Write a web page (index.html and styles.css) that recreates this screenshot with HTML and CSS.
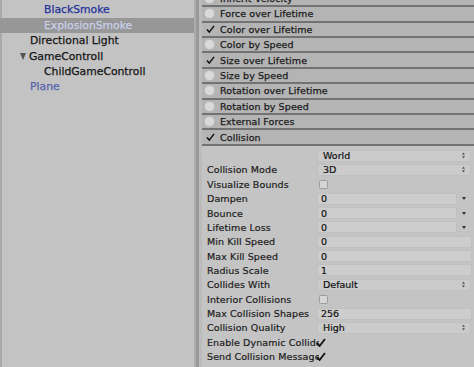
FILE: index.html
```html
<!DOCTYPE html>
<html>
<head>
<meta charset="utf-8">
<link rel="stylesheet" href="styles.css">
</head>
<body>
<div class="app">
  <div class="hierarchy">
    <div class="hrow lvl2 prefab">BlackSmoke</div>
    <div class="hrow lvl2 selected">ExplosionSmoke</div>
    <div class="hrow lvl1">Directional Light</div>
    <div class="hrow lvl0"><span class="tri"></span>GameControll</div>
    <div class="hrow lvl2">ChildGameControll</div>
    <div class="hrow lvl1 prefab-light">Plane</div>
  </div>
  <div class="split"></div>
  <div class="inspector">
    <div class="modules">
      <div class="mod"><span class="radio"></span><span class="mtitle">Inherit Velocity</span></div>
      <div class="mod"><span class="radio"></span><span class="mtitle">Force over Lifetime</span></div>
      <div class="mod"><svg class="check" viewBox="0 0 10 9"><path d="M1 5 L3.6 8 L9 1" fill="none" stroke="#111" stroke-width="1.7"/></svg><span class="mtitle">Color over Lifetime</span></div>
      <div class="mod"><span class="radio"></span><span class="mtitle">Color by Speed</span></div>
      <div class="mod"><svg class="check" viewBox="0 0 10 9"><path d="M1 5 L3.6 8 L9 1" fill="none" stroke="#111" stroke-width="1.7"/></svg><span class="mtitle">Size over Lifetime</span></div>
      <div class="mod"><span class="radio"></span><span class="mtitle">Size by Speed</span></div>
      <div class="mod"><span class="radio"></span><span class="mtitle">Rotation over Lifetime</span></div>
      <div class="mod"><span class="radio"></span><span class="mtitle">Rotation by Speed</span></div>
      <div class="mod"><span class="radio"></span><span class="mtitle">External Forces</span></div>
      <div class="mod"><svg class="check" viewBox="0 0 10 9"><path d="M1 5 L3.6 8 L9 1" fill="none" stroke="#111" stroke-width="1.7"/></svg><span class="mtitle">Collision</span></div>
      <div class="body">
        <div class="prow"><span class="lbl"></span><div class="field drop"><span>World</span><svg class="updown" viewBox="0 0 4 8"><path d="M2 0 L4 3 L0 3Z M0 5 L4 5 L2 8Z" fill="#555"/></svg></div></div>
        <div class="prow"><span class="lbl">Collision Mode</span><div class="field drop"><span>3D</span><svg class="updown" viewBox="0 0 4 8"><path d="M2 0 L4 3 L0 3Z M0 5 L4 5 L2 8Z" fill="#555"/></svg></div></div>
        <div class="prow"><span class="lbl">Visualize Bounds</span><span class="cbox"></span></div>
        <div class="prow"><span class="lbl">Dampen</span><div class="fwrap"><div class="field num">0</div><svg class="tdot" viewBox="0 0 4 3"><path d="M0 0 L4 0 L2 3Z" fill="#333"/></svg></div></div>
        <div class="prow"><span class="lbl">Bounce</span><div class="fwrap"><div class="field num">0</div><svg class="tdot" viewBox="0 0 4 3"><path d="M0 0 L4 0 L2 3Z" fill="#333"/></svg></div></div>
        <div class="prow"><span class="lbl">Lifetime Loss</span><div class="fwrap"><div class="field num">0</div><svg class="tdot" viewBox="0 0 4 3"><path d="M0 0 L4 0 L2 3Z" fill="#333"/></svg></div></div>
        <div class="prow"><span class="lbl">Min Kill Speed</span><div class="field num full">0</div></div>
        <div class="prow"><span class="lbl">Max Kill Speed</span><div class="field num full">0</div></div>
        <div class="prow"><span class="lbl">Radius Scale</span><div class="field num full">1</div></div>
        <div class="prow"><span class="lbl">Collides With</span><div class="field drop"><span>Default</span><svg class="updown" viewBox="0 0 4 8"><path d="M2 0 L4 3 L0 3Z M0 5 L4 5 L2 8Z" fill="#555"/></svg></div></div>
        <div class="prow"><span class="lbl">Interior Collisions</span><span class="cbox"></span></div>
        <div class="prow"><span class="lbl">Max Collision Shapes</span><div class="field num full">256</div></div>
        <div class="prow"><span class="lbl">Collision Quality</span><div class="field drop"><span>High</span><svg class="updown" viewBox="0 0 4 8"><path d="M2 0 L4 3 L0 3Z M0 5 L4 5 L2 8Z" fill="#555"/></svg></div></div>
        <div class="prow"><span class="lbl">Enable Dynamic Colliders</span><svg class="pcheck" viewBox="0 0 10 9"><path d="M1 5 L3.6 8 L9 1" fill="none" stroke="#111" stroke-width="1.8"/></svg></div>
        <div class="prow"><span class="lbl">Send Collision Messages</span><svg class="pcheck" viewBox="0 0 10 9"><path d="M1 5 L3.6 8 L9 1" fill="none" stroke="#111" stroke-width="1.8"/></svg></div>
      </div>
    </div>
  </div>
</div>
</body>
</html>
```

FILE: styles.css
```css
html, body {
  margin: 0;
  padding: 0;
}
body {
  width: 474px;
  height: 367px;
  overflow: hidden;
  background: #c3c3c3;
  font-family: "DejaVu Sans", "Liberation Sans", sans-serif;
}
.app {
  display: flex;
  width: 474px;
  height: 367px;
}
.hierarchy {
  flex: 0 0 194px;
  box-sizing: border-box;
  background: #c3c3c3;
  box-shadow: inset 2px 0 0 #a9a9a9;
  padding-top: 2.4px;
}
.hrow {
  height: 15.4px;
  line-height: 15.4px;
  font-size: 10.8px;
  color: #141414;
  white-space: nowrap;
  display: flex;
  align-items: center;
  -webkit-text-stroke: 0.25px currentColor;
}
.lvl0 { padding-left: 20px; }
.lvl1 { padding-left: 30px; }
.lvl2 { padding-left: 44px; }
.prefab { color: #23329a; }
.prefab-light { color: #5663ad; }
.selected {
  background: #979797;
  color: #c9cfea;
}
.tri {
  width: 0;
  height: 0;
  border-left: 3.5px solid transparent;
  border-right: 3.5px solid transparent;
  border-top: 7px solid #555;
  margin-right: 3px;
}
.split {
  flex: 0 0 5px;
  box-sizing: border-box;
  border-left: 2px solid #adadad;
  background: #999999;
}
.inspector {
  flex: 1;
  background: #bbbbbb;
  padding-left: 3px;
  overflow: hidden;
}
.modules {
  margin-top: -8.1px;
}
.mod {
  height: 15.4px;
  box-sizing: border-box;
  background: #b4b4b4;
  border-bottom: 2px solid #727272;
  display: flex;
  align-items: center;
  padding-left: 3px;
  font-size: 9.5px;
  color: #1a1a1a;
  white-space: nowrap;
}
.radio {
  width: 9px;
  height: 9px;
  border-radius: 50%;
  background: #d9d9d9;
  box-shadow: 0 0 0 0.5px #c6c6c6;
  margin-right: 6px;
  flex: none;
}
.check {
  width: 9px;
  height: 8px;
  margin-left: 1px;
  margin-right: 5px;
  flex: none;
}
.mtitle {
  letter-spacing: 0.1px;
  -webkit-text-stroke: 0.25px currentColor;
}
.body {
  background: #c4c4c4;
  padding-top: 2.6px;
  padding-left: 5px;
  height: 230px;
}
.prow {
  height: 14.36px;
  display: grid;
  grid-template-columns: 110px 1fr;
  align-items: center;
  font-size: 9.5px;
  color: #1c1c1c;
  -webkit-text-stroke: 0.2px currentColor;
}
.lbl {
  width: 112px;
  overflow: hidden;
  white-space: nowrap;
  letter-spacing: 0.1px;
}
.field {
  height: 12px;
  box-sizing: border-box;
  background: #cdcdcd;
  border: 1px solid #c0c0c0;
  border-radius: 2px;
  display: flex;
  align-items: center;
  color: #111;
}
.drop {
  margin-right: 3px;
  padding-left: 5px;
  padding-right: 5px;
  justify-content: space-between;
  background: #cbcbcb;
}
.updown {
  width: 3px;
  height: 7px;
}
.num {
  padding-left: 3px;
}
.full {
  margin-right: 2px;
}
.fwrap {
  display: flex;
  align-items: center;
}
.fwrap .field {
  flex: 0 0 140px;
}
.tdot {
  width: 4px;
  height: 3px;
  margin-left: 5px;
}
.cbox {
  width: 9px;
  height: 9px;
  box-sizing: border-box;
  border: 1px solid #9d9d9d;
  background: #d6d6d6;
  border-radius: 1.5px;
  margin-left: 2px;
}
.pcheck {
  width: 10px;
  height: 9px;
  margin-left: -1px;
}
```
